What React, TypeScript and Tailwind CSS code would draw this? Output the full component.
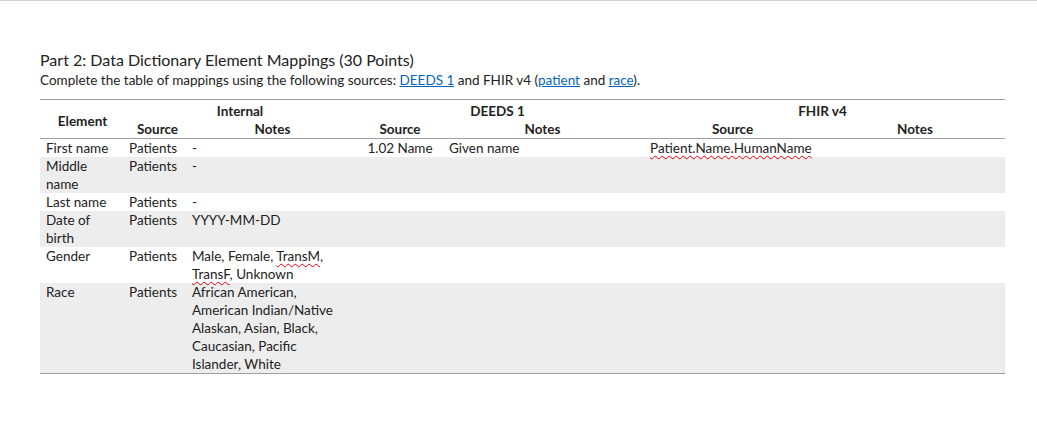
import React from 'react';

const rows = [
  { el: 'First name', src: 'Patients', notes: '-', dsrc: '1.02 Name', dnotes: 'Given name', fsrc: 'Patient.Name.HumanName' },
  { el: 'Middle name', src: 'Patients', notes: '-' },
  { el: 'Last name', src: 'Patients', notes: '-' },
  { el: 'Date of birth', src: 'Patients', notes: 'YYYY-MM-DD' },
  { el: 'Gender', src: 'Patients', notes: 'gender' },
  { el: 'Race', src: 'Patients', notes: 'African American, American Indian/Native Alaskan, Asian, Black, Caucasian, Pacific Islander, White' },
];

const wavy = 'underline decoration-wavy decoration-red-600 decoration-1 underline-offset-2';

export default function App() {
  return (
    <div className="w-[1037px] h-[441px] bg-white border-t border-[#d0d0d0] text-[#222] text-[13.5px] leading-[18px]" style={{ fontFamily: 'Lato, "Open Sans", sans-serif' }}>
      <div className="pl-[40px] pt-[49px]">
        <div className="text-[16px] leading-[20px]">Part 2: Data Dictionary Element Mappings (30 Points)</div>
        <div className="mt-[1px]">
          Complete the table of mappings using the following sources: <span className="text-[#0563c1] underline">DEEDS 1</span> and FHIR v4 (<span className="text-[#0563c1] underline">patient</span> and <span className="text-[#0563c1] underline">race</span>).
        </div>
        <table className="mt-[10px] w-[965px] table-fixed border-collapse border-t border-b border-[#a0a0a0]">
          <colgroup>
            <col className="w-[85px]" />
            <col className="w-[65px]" />
            <col className="w-[165px]" />
            <col className="w-[90px]" />
            <col className="w-[195px]" />
            <col className="w-[185px]" />
            <col className="w-[180px]" />
          </colgroup>
          <thead className="border-b border-[#a0a0a0]">
            <tr>
              <th rowSpan={2} className="align-middle pt-[3px] font-bold">Element</th>
              <th colSpan={2} className="pt-[2px] font-bold">Internal</th>
              <th colSpan={2} className="pt-[2px] font-bold">DEEDS 1</th>
              <th colSpan={2} className="pt-[2px] font-bold">FHIR v4</th>
            </tr>
            <tr>
              <th className="font-bold">Source</th>
              <th className="font-bold">Notes</th>
              <th className="font-bold">Source</th>
              <th className="font-bold">Notes</th>
              <th className="font-bold">Source</th>
              <th className="font-bold">Notes</th>
            </tr>
          </thead>
          <tbody>
            {rows.map((r, i) => (
              <tr key={r.el} className={i % 2 === 1 ? 'bg-[#ededed]' : ''}>
                <td className="align-top pl-[6px] pr-[12px]">{r.el}</td>
                <td className="align-top pl-[4px]">{r.src}</td>
                <td className="align-top pl-[2px] pr-5">
                  {r.notes === 'gender' ? (
                    <>Male, Female, <span className={wavy}>TransM</span>, <span className={wavy}>TransF</span>, Unknown</>
                  ) : r.notes}
                </td>
                <td className="align-top text-center">{r.dsrc}</td>
                <td className="align-top pl-[4px]">{r.dnotes}</td>
                <td className="align-top pl-[10px]">{r.fsrc && <span className={wavy}>{r.fsrc}</span>}</td>
                <td />
              </tr>
            ))}
          </tbody>
        </table>
      </div>
    </div>
  );
}
